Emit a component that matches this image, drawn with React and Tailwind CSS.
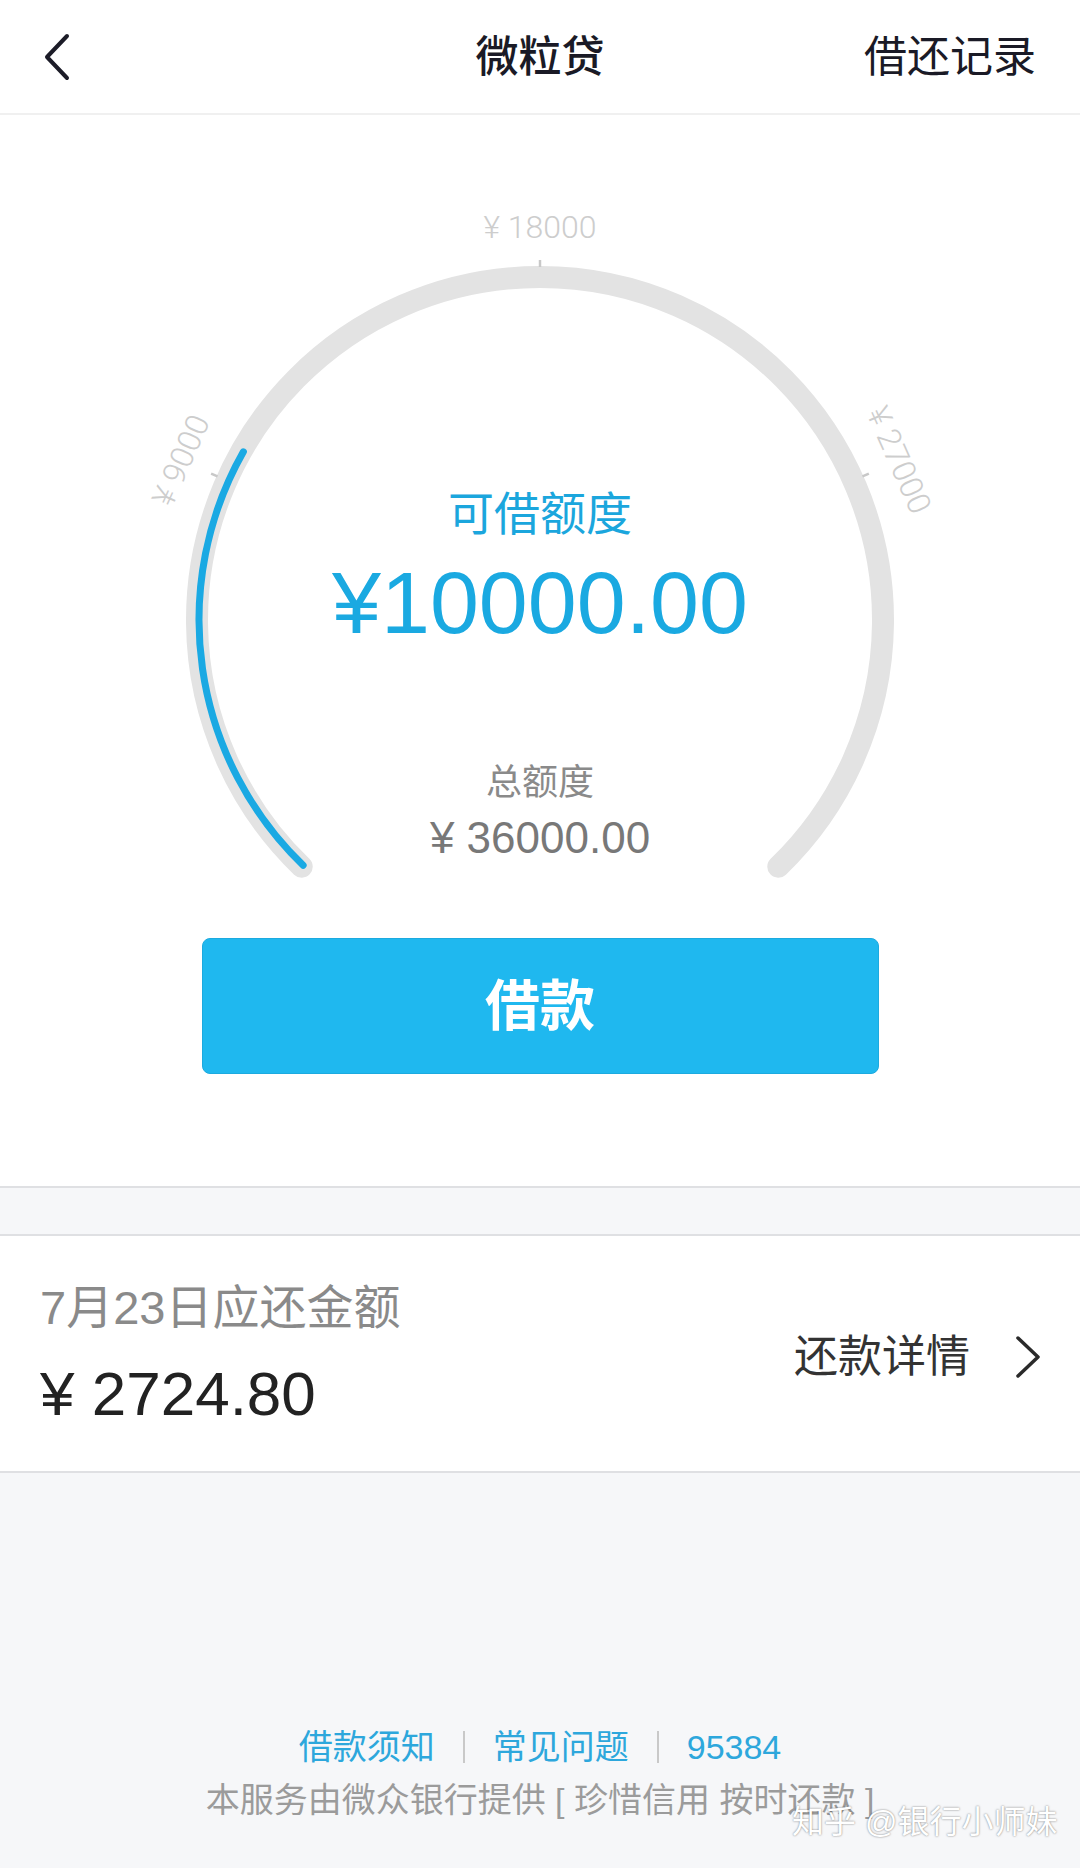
import React from 'react';

const CX = 540;
const CY = 505;
const R = 343;

const pt = (deg, r) => {
  const a = (deg * Math.PI) / 180;
  return [CX + r * Math.sin(a), CY - r * Math.cos(a)];
};

const arc = (from, to, r) => {
  const [x1, y1] = pt(from, r);
  const [x2, y2] = pt(to, r);
  const large = to - from > 180 ? 1 : 0;
  return `M${x1} ${y1} A${r} ${r} 0 ${large} 1 ${x2} ${y2}`;
};

const marks = [
  { deg: -66, label: '¥ 9000' },
  { deg: 0, label: '¥ 18000' },
  { deg: 66, label: '¥ 27000' },
];

const available = 10000;
const total = 36000;

const Gauge = () => {
  const start = -136;
  const end = 136;
  const fill = start + (end - start) * (available / total);
  return (
    <svg className="absolute inset-0" width="1080" height="823" viewBox="0 0 1080 823">
      <path d={arc(start, end, R)} fill="none" stroke="#e3e3e3" strokeWidth="22" strokeLinecap="round" />
      <path d={arc(start, fill, R - 2)} fill="none" stroke="#1aa9e3" strokeWidth="7" strokeLinecap="round" />
      {marks.map((m) => {
        const [x1, y1] = pt(m.deg, R + 10);
        const [x2, y2] = pt(m.deg, R + 17);
        const [lx, ly] = pt(m.deg, 393);
        return (
          <g key={m.label}>
            <line x1={x1} y1={y1} x2={x2} y2={y2} stroke="#c8c8c8" strokeWidth="2.5" />
            <text
              x={lx}
              y={ly}
              textAnchor="middle"
              dominantBaseline="central"
              transform={`rotate(${m.deg} ${lx} ${ly})`}
              className="font-['Roboto','Liberation_Sans',sans-serif] font-light text-[32px] fill-[#cdcdcd]"
            >
              {m.label}
            </text>
          </g>
        );
      })}
    </svg>
  );
};

export default function App() {
  return (
    <div className="relative w-[1080px] min-h-[1868px] bg-[#f6f7f9] font-['Liberation_Sans','Noto_Sans_CJK_SC',sans-serif]">
      <div className="bg-white">
        {/* header */}
        <div className="grid grid-cols-[1fr_auto_1fr] items-center h-[115px] border-b-2 border-[#f0f0f0]">
          <div className="pl-[43px]">
            <svg width="28" height="48" viewBox="0 0 28 48">
              <path d="M24 3 L4 24 L24 45" fill="none" stroke="#1c1c28" strokeWidth="4" strokeLinecap="round" strokeLinejoin="round" />
            </svg>
          </div>
          <div className="text-[43px] leading-[50px] font-medium text-[#1a1a26]">微粒贷</div>
          <div className="text-right pr-[44px] text-[43px] leading-[50px] text-[#1a1a26]">借还记录</div>
        </div>

        {/* gauge */}
        <div className="relative h-[823px]">
          <Gauge />
          <div className="relative flex flex-col items-center">
            <div className="mt-[371px] text-[46px] leading-[56px] text-[#1ba6dd]">可借额度</div>
            <div className="mt-[11px] text-[88px] leading-[100px] text-[#1aa9e1]">¥10000.00</div>
            <div className="mt-[108px] text-[36px] leading-[44px] text-[#8a8a8a]">总额度</div>
            <div className="mt-[7px] text-[44px] leading-[52px] text-[#787878]">¥ 36000.00</div>
          </div>
        </div>

        {/* button */}
        <div className="h-[248px]">
          <button className="mx-auto flex items-center justify-center w-[677px] h-[136px] rounded-[8px] bg-[#1fb8ef] border border-[#1caadf] text-white text-[55px] font-bold">
            借款
          </button>
        </div>
      </div>

      <div className="h-[50px] border-y-2 border-[#dfe0e3]" />

      {/* repayment card */}
      <div className="flex justify-between h-[237px] bg-white border-b-2 border-[#dfe0e3] pl-[40px] pr-[38px]">
        <div>
          <div className="mt-[45px] text-[47px] leading-[54px] text-[#8a8a8a]">7月23日应还金额</div>
          <div className="mt-[23px] text-[62px] leading-[72px] text-[#222]">¥ 2724.80</div>
        </div>
        <div className="flex items-center gap-[44px] mt-[97px] self-start">
          <span className="text-[44px] leading-[48px] text-[#333]">还款详情</span>
          <svg width="28" height="44" viewBox="0 0 28 44">
            <path d="M4 3 L24 22 L4 41" fill="none" stroke="#2a2a2a" strokeWidth="3.5" strokeLinecap="round" strokeLinejoin="round" />
          </svg>
        </div>
      </div>

      {/* footer */}
      <div className="flex flex-col items-center">
        <div className="mt-[252px] flex items-center text-[34px] leading-[44px] text-[#2da7dc]">
          <span>借款须知</span>
          <span className="mx-[28px] w-[2px] h-[32px] bg-[#c9c9c9]" />
          <span>常见问题</span>
          <span className="mx-[28px] w-[2px] h-[32px] bg-[#c9c9c9]" />
          <span>95384</span>
        </div>
        <div className="mt-[9px] text-[34px] leading-[44px] text-[#9b9b9b]">本服务由微众银行提供 [ 珍惜信用 按时还款 ]</div>
      </div>

      <div className="absolute left-[792px] top-[1802px] text-[32px] leading-[40px] text-white [text-shadow:0_0_2px_rgba(0,0,0,0.55)]">
        知乎 @银行小师妹
      </div>
    </div>
  );
}
